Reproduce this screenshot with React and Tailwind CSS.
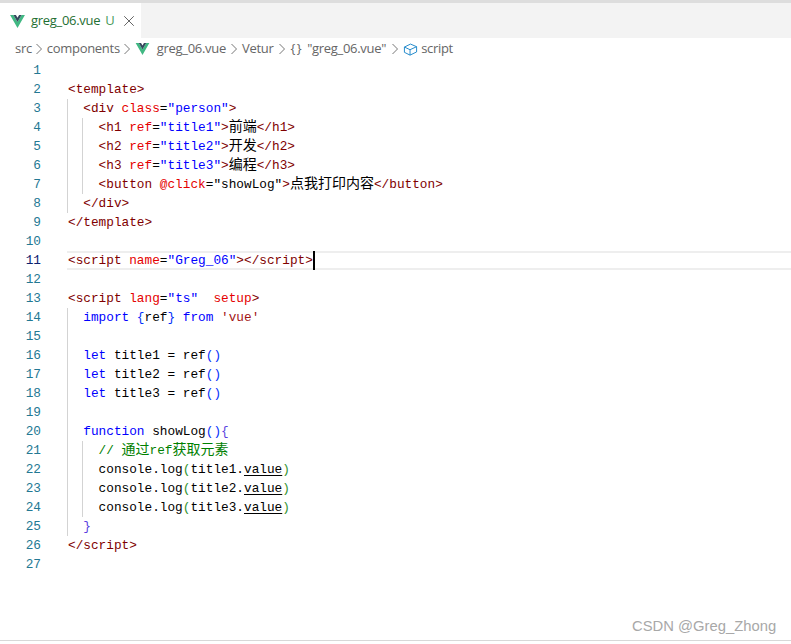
import React from "react";
import { X } from "lucide-react";

const T = "text-[#800000]", A = "text-[#e50000]", S = "text-[#0000ff]", K = "text-[#0000ff]", P = "text-[#0431fa]", G = "text-[#319331]", C = "text-[#008000]", R = "text-[#a31515]", B = "text-black", U = "text-black underline underline-offset-2", Z = "text-black text-[14px]", V = "text-[#5a3fe0]";

const lines = [
  [0, []],
  [0, [[T, "<template>"]]],
  [1, [[T, "<div "], [A, "class"], [B, "="], [S, '"person"'], [T, ">"]]],
  [2, [[T, "<h1 "], [A, "ref"], [B, "="], [S, '"title1"'], [T, ">"], [Z, "前端"], [T, "</h1>"]]],
  [2, [[T, "<h2 "], [A, "ref"], [B, "="], [S, '"title2"'], [T, ">"], [Z, "开发"], [T, "</h2>"]]],
  [2, [[T, "<h3 "], [A, "ref"], [B, "="], [S, '"title3"'], [T, ">"], [Z, "编程"], [T, "</h3>"]]],
  [2, [[T, "<button "], [A, "@click"], [B, "="], [B, '"showLog"'], [T, ">"], [Z, "点我打印内容"], [T, "</button>"]]],
  [1, [[T, "</div>"]]],
  [0, [[T, "</template>"]]],
  [0, []],
  [0, [[T, "<script "], [A, "name"], [B, "="], [S, '"Greg_06"'], [T, "></script>"]]],
  [0, []],
  [0, [[T, "<script "], [A, "lang"], [B, "="], [S, '"ts"'], [B, "  "], [A, "setup"], [T, ">"]]],
  [1, [[K, "import "], [P, "{"], [B, "ref"], [P, "}"], [K, " from "], [R, "'vue'"]]],
  [1, []],
  [1, [[K, "let "], [B, "title1 = ref"], [P, "()"]]],
  [1, [[K, "let "], [B, "title2 = ref"], [P, "()"]]],
  [1, [[K, "let "], [B, "title3 = ref"], [P, "()"]]],
  [1, []],
  [1, [[K, "function "], [B, "showLog"], [P, "()"], [V, "{"]]],
  [2, [[C, "// "], [C + " text-[14px]", "通过"], [C, "ref"], [C + " text-[14px]", "获取元素"]]],
  [2, [[B, "console.log"], [G, "("], [B, "title1."], [U, "value"], [G, ")"]]],
  [2, [[B, "console.log"], [G, "("], [B, "title2."], [U, "value"], [G, ")"]]],
  [2, [[B, "console.log"], [G, "("], [B, "title3."], [U, "value"], [G, ")"]]],
  [1, [[V, "}"]]],
  [0, [[T, "</script>"]]],
  [0, []],
];

function Vue({ className }) {
  return (
    <svg viewBox="0 0 16 14" className={className}>
      <path d="M0 0h3.6L8 7.6 12.4 0H16L8 14z" fill="#41b883" />
      <path d="M3.6 0h2.7L8 3 9.7 0h2.7L8 7.6z" fill="#35495e" />
    </svg>
  );
}

function Chevron({ className = "mx-[4.5px]" }) {
  return (
    <svg viewBox="0 0 8 12" className={`w-[8px] h-[12px] shrink-0 ${className}`} fill="none" stroke="#777" strokeWidth="1">
      <path d="M1.5 1l5 5-5 5" />
    </svg>
  );
}

function Cube() {
  return (
    <svg viewBox="0 0 16 16" className="w-[15px] h-[15px] mr-[3px]" fill="none" stroke="#1a85c9" strokeWidth="1">
      <path d="M8 2.2l6.5 2.8v5.6L7.5 14 1.5 11V5.4z" />
      <path d="M1.5 5.4l6 2.8 7-3.2M7.5 8.2V14" />
    </svg>
  );
}

function Line({ n, indent, tokens }) {
  const active = n === 11;
  return (
    <div className="flex h-[19px] leading-[19px]">
      <div className={`w-[41px] text-right shrink-0 ${active ? "text-[#0b216f]" : "text-[#237893]"}`}>{n}</div>
      <div className={`ml-[26px] flex-1 flex whitespace-pre ${active ? "border-y-2 border-[#eeeeee] leading-[15px]" : ""}`}>
        {Array.from({ length: indent }).map((_, i) => (
          <span key={i} className="w-[15.3px] shrink-0 border-l border-[#d3d3d3]" />
        ))}
        <span className="ml-[1px]">
          {tokens.map(([c, t], i) => (
            <span key={i} className={c}>{t}</span>
          ))}
        </span>
        {active && <span className="w-[2px] h-[19px] -mt-[2px] bg-black shrink-0" />}
      </div>
    </div>
  );
}

export default function App() {
  return (
    <div className="relative w-[791px] h-[644px] bg-white overflow-hidden flex flex-col font-['Open_Sans','Noto_Sans',sans-serif]">
      <div className="h-[3px] bg-[#dddddd] shrink-0" />
      <div className="h-[35px] bg-[#f3f3f3] flex shrink-0">
        <div className="w-[141px] bg-white flex items-center pl-[10px] pt-[1px]">
          <Vue className="w-[15px] h-[13px] mr-[6px]" />
          <span className="text-[13px] text-[#1f6f33] tracking-[-0.3px]">greg_06.vue</span>
          <span className="text-[13px] text-[#4a9a5c] ml-[5px]">U</span>
          <X className="w-[18px] h-[18px] ml-[5px] text-[#555]" strokeWidth={1.2} />
        </div>
      </div>
      <div className="h-[22px] flex items-center pl-[15px] text-[13px] text-[#666] tracking-[-0.3px] shrink-0">
        <span>src</span>
        <Chevron className="mx-[3.5px]" />
        <span>components</span>
        <Chevron className="mx-[3.5px]" />
        <Vue className="w-[15px] h-[12px] mr-[7px]" />
        <span>greg_06.vue</span>
        <Chevron className="mx-[4px]" />
        <span>Vetur</span>
        <Chevron />
        <span className="mr-[4px] tracking-[1.5px]">{"{}"}</span>
        <span>"greg_06.vue"</span>
        <Chevron />
        <Cube />
        <span>script</span>
      </div>
      <div className="flex-1 pt-[1px] text-[12.75px] font-['Liberation_Mono','Noto_Sans_CJK_SC',monospace]">
        {lines.map(([indent, tokens], i) => (
          <Line key={i} n={i + 1} indent={indent} tokens={tokens} />
        ))}
      </div>
      <div className="h-[1px] bg-[#d8d8d8] mb-[3px] shrink-0" />
      <div className="absolute left-[632px] top-[616px] text-[14.8px] leading-[20px] text-[#a8a8a8] font-['Liberation_Sans',sans-serif] whitespace-nowrap">
        CSDN @Greg_Zhong
      </div>
    </div>
  );
}
